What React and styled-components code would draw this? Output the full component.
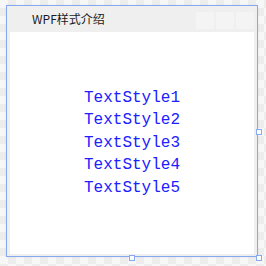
import React from "react";
import styled, { createGlobalStyle } from "styled-components";

const Global = createGlobalStyle`
  html, body { margin: 0; padding: 0; }
  body {
    width: 266px;
    height: 266px;
    overflow: hidden;
    background-color: #f7f7f7;
    background-image:
      linear-gradient(45deg, #ededed 25%, transparent 25%, transparent 75%, #ededed 75%),
      linear-gradient(45deg, #ededed 25%, transparent 25%, transparent 75%, #ededed 75%);
    background-size: 16px 16px;
    background-position: 0 0, 8px 8px;
  }
`;

const Stage = styled.div`
  padding: 5px 0 0 6px;
`;

const Window = styled.div`
  position: relative;
  box-sizing: border-box;
  width: 252px;
  height: 252px;
  border: 1px solid #87a9f2;
  background: #efefef;
  display: flex;
  flex-direction: column;
  padding: 0 3px 2px 3px;
  box-shadow: 0 0 2px rgba(0, 0, 0, 0.08);
`;

const TitleBar = styled.div`
  height: 26px;
  display: flex;
  align-items: center;
  justify-content: space-between;
  padding-left: 22px;
`;

const Title = styled.span`
  font-family: "Noto Sans CJK SC", "Noto Sans", sans-serif;
  font-size: 12px;
  color: #1b1b1b;
  line-height: 1;
`;

const Buttons = styled.div`
  display: flex;
  gap: 2px;
  align-self: flex-start;
  margin-top: 6px;
  margin-right: 0px;
`;

const WinButton = styled.div`
  width: 18px;
  height: 17px;
  background: #f4f4f4;
`;

const Content = styled.div`
  flex: 1;
  background: #ffffff;
  display: flex;
  flex-direction: column;
  align-items: center;
  justify-content: center;
`;

const Line = styled.div`
  font-family: "Liberation Mono", "DejaVu Sans Mono", monospace;
  font-size: 16px;
  line-height: 22.5px;
  color: #2020ff;
`;

const Handle = styled.div`
  position: absolute;
  width: 4px;
  height: 4px;
  border: 1px solid #87a9f2;
  background: #ffffff;
  left: ${(p) => p.$x}px;
  top: ${(p) => p.$y}px;
`;

export default function App() {
  return (
    <>
      <Global />
      <Stage>
        <Window>
          <TitleBar>
            <Title>WPF样式介绍</Title>
            <Buttons>
              <WinButton />
              <WinButton />
              <WinButton />
            </Buttons>
          </TitleBar>
          <Content>
            {[1, 2, 3, 4, 5].map((n) => (
              <Line key={n}>TextStyle{n}</Line>
            ))}
          </Content>
          <Handle $x={122} $y={249} />
          <Handle $x={249} $y={123} />
          <Handle $x={249} $y={249} />
        </Window>
      </Stage>
    </>
  );
}
